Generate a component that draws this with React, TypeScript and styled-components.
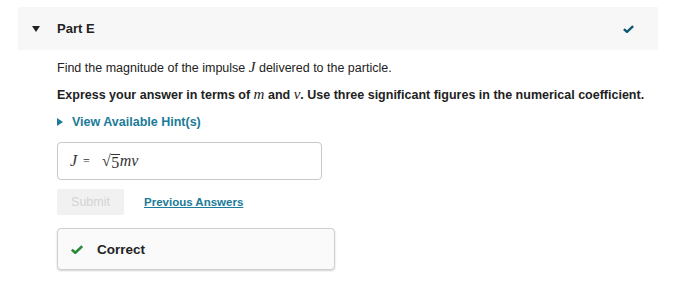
import React from "react";
import styled, { createGlobalStyle } from "styled-components";

const Global = createGlobalStyle`
  html, body { margin: 0; padding: 0; background: #ffffff; }
  body { font-family: "Liberation Sans", Arial, sans-serif; color: #222; }
`;

const Page = styled.div`
  width: 700px;
  height: 285px;
  padding: 7px 42px 0 18px;
  box-sizing: border-box;
  overflow: hidden;
`;

const Header = styled.div`
  height: 43px;
  background: #f7f7f7;
  display: flex;
  align-items: center;
  padding: 0 24px 0 14px;
`;

const Caret = styled.span<{ $dir: "down" | "right"; $color: string }>`
  display: inline-block;
  width: 0;
  height: 0;
  ${(p) =>
    p.$dir === "down"
      ? `border-left: 4.5px solid transparent; border-right: 4.5px solid transparent; border-top: 6px solid ${p.$color};`
      : `border-top: 4.5px solid transparent; border-bottom: 4.5px solid transparent; border-left: 6px solid ${p.$color};`}
`;

const PartTitle = styled.span`
  margin-left: 17px;
  font-size: 13px;
  font-weight: bold;
  color: #222;
  flex: 1;
`;

const Body = styled.div`
  padding: 10px 0 0 39px;
  display: flex;
  flex-direction: column;
  align-items: flex-start;
`;

const Prompt = styled.p<{ $bold?: boolean }>`
  margin: 0 0 ${(p) => (p.$bold ? 12 : 11)}px 0;
  font-size: 12.5px;
  line-height: 15px;
  font-weight: ${(p) => (p.$bold ? "bold" : "normal")};
  color: #222;
  white-space: nowrap;
`;

const MathVar = styled.span`
  font-family: "Liberation Serif", "Times New Roman", serif;
  font-style: italic;
  font-weight: normal;
  font-size: 15px;
`;

const HintLink = styled.a`
  display: flex;
  align-items: center;
  gap: 9px;
  font-size: 12.5px;
  font-weight: bold;
  color: #1b7b99;
  text-decoration: none;
  margin: 0 0 13px 0;
`;

const AnswerBox = styled.div`
  width: 265px;
  height: 38px;
  box-sizing: border-box;
  border: 1px solid #c9c9c9;
  border-radius: 4px;
  display: flex;
  align-items: center;
  padding-left: 12px;
  font-family: "Liberation Serif", "Times New Roman", serif;
  font-size: 16px;
  color: #333;
`;

const Eq = styled.span`
  font-style: normal;
  font-size: 12px;
  margin: 0 12px 0 6px;
`;

const Radical = styled.span`
  display: inline-flex;
  align-items: flex-end;
`;

const RadicalBody = styled.span`
  border-top: 1px solid #333;
  line-height: 15px;
  padding: 0 0.5px;
  font-style: normal;
`;

const Actions = styled.div`
  display: flex;
  align-items: center;
  margin-top: 9px;
  gap: 20px;
`;

const SubmitButton = styled.button`
  width: 67px;
  height: 26px;
  border: none;
  border-radius: 2px;
  background: #f1f1f1;
  color: #d4d4d4;
  font-family: "Liberation Sans", Arial, sans-serif;
  font-size: 12.5px;
  padding: 0;
`;

const PrevLink = styled.a`
  font-size: 11.5px;
  font-weight: bold;
  color: #1b7b99;
  text-decoration: underline;
`;

const Feedback = styled.div`
  margin-top: 13px;
  width: 278px;
  height: 42px;
  box-sizing: border-box;
  border: 1px solid #cfcfcf;
  border-radius: 4px;
  background: #fafafa;
  box-shadow: 0 1px 2px rgba(0, 0, 0, 0.18);
  display: flex;
  align-items: center;
  padding-left: 13px;
  gap: 14px;
  font-size: 13.5px;
  font-weight: bold;
  color: #222;
`;

const Check = ({ color, w, h }: { color: string; w: number; h: number }) => (
  <svg width={w} height={h} viewBox="0 0 12 9">
    <path d="M0.8 4.6 L4.3 7.8 L11.2 1.2" fill="none" stroke={color} strokeWidth="2.6" strokeLinejoin="miter" />
  </svg>
);

export default function App() {
  return (
    <>
      <Global />
      <Page>
        <Header>
          <Caret $dir="down" $color="#222" />
          <PartTitle>Part E</PartTitle>
          <Check color="#0f5a73" w={11} h={8} />
        </Header>
        <Body>
          <Prompt>
            Find the magnitude of the impulse <MathVar>J</MathVar> delivered to the particle.
          </Prompt>
          <Prompt $bold>
            Express your answer in terms of <MathVar>m</MathVar> and <MathVar>v</MathVar>. Use three significant
            figures in the numerical coefficient.
          </Prompt>
          <HintLink>
            <Caret $dir="right" $color="#1b7b99" />
            View Available Hint(s)
          </HintLink>
          <AnswerBox>
            <i>J</i>
            <Eq>=</Eq>
            <Radical>
              <span style={{ fontStyle: "normal" }}>√</span>
              <RadicalBody>5</RadicalBody>
            </Radical>
            <i>mv</i>
          </AnswerBox>
          <Actions>
            <SubmitButton>Submit</SubmitButton>
            <PrevLink>Previous Answers</PrevLink>
          </Actions>
          <Feedback>
            <Check color="#2a8a3a" w={12} h={9} />
            Correct
          </Feedback>
        </Body>
      </Page>
    </>
  );
}
